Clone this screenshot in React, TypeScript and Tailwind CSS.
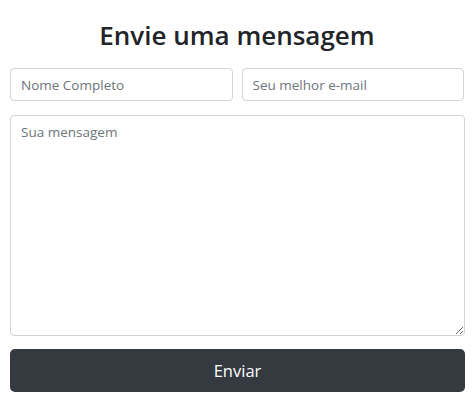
export default function App() {
  return (
    <div className="w-[474px] h-[412px] bg-white px-[10px] pt-[18px]" style={{ fontFamily: '"Open Sans", "Noto Sans", sans-serif' }}>
      <h2 className="text-center text-[26px] leading-[34px] font-semibold text-[#212529] mb-[16px]">Envie uma mensagem</h2>
      <div className="flex gap-[9px] mb-[14px]">
        <input placeholder="Nome Completo" className="w-[223px] h-[33px] border border-[#ced4da] rounded-[4px] px-[10px] text-[13.5px] text-[#495057] placeholder:text-[#6c757d] outline-none" />
        <input placeholder="Seu melhor e-mail" className="w-[223px] h-[33px] border border-[#ced4da] rounded-[4px] px-[10px] text-[13.5px] text-[#495057] placeholder:text-[#6c757d] outline-none" />
      </div>
      <textarea placeholder="Sua mensagem" className="block w-[455px] h-[221px] border border-[#ced4da] rounded-[4px] px-[10px] py-[6px] text-[13.5px] text-[#495057] placeholder:text-[#6c757d] outline-none mb-[13px]" />
      <button className="block w-[455px] h-[43px] bg-[#343a40] text-white rounded-[5px] text-[16.5px] leading-[43px]">Enviar</button>
    </div>
  );
}
